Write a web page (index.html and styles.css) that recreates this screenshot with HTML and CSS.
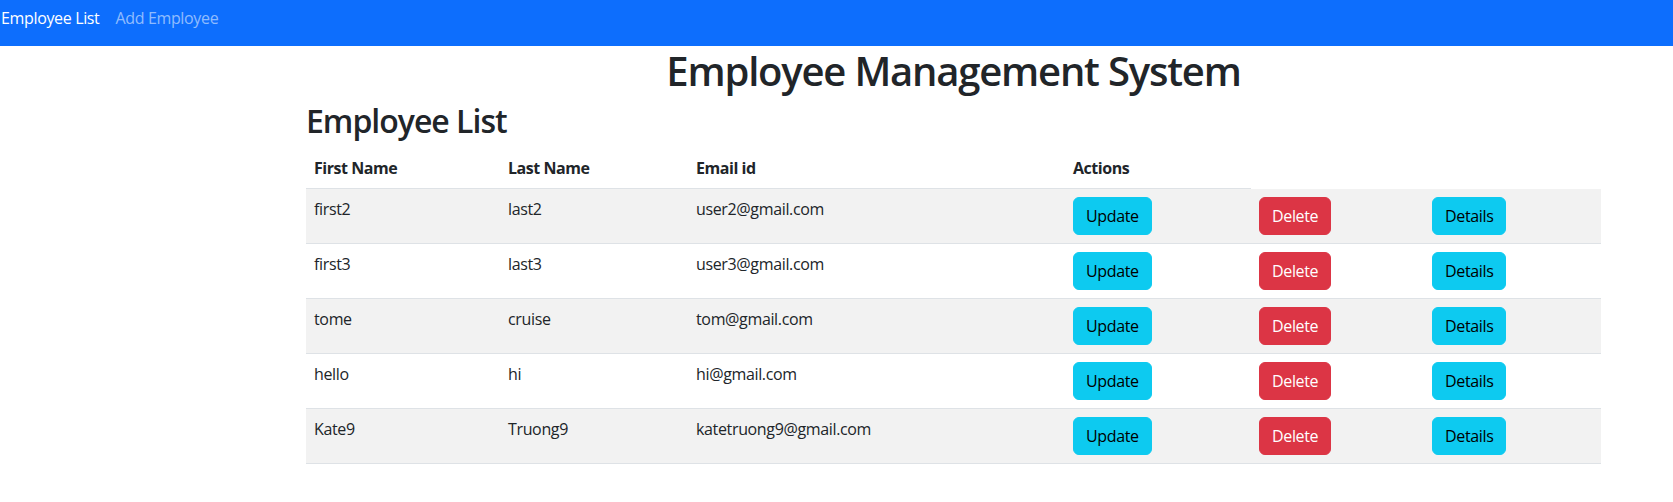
FILE: index.html
```html
<!DOCTYPE html>
<html lang="en">
<head>
<meta charset="utf-8">
<title>Employee Management System</title>
<link rel="stylesheet" href="styles.css">
</head>
<body>
<nav class="navbar">
  <a class="nav-link active" href="#">Employee List</a>
  <a class="nav-link" href="#">Add Employee</a>
</nav>
<main class="container">
  <h1 class="title">Employee Management System</h1>
  <h2 class="subtitle">Employee List</h2>
  <table class="table">
    <colgroup>
      <col class="c-first">
      <col class="c-last">
      <col class="c-email">
      <col class="c-act1">
      <col class="c-act2">
      <col class="c-act3">
    </colgroup>
    <thead>
      <tr>
        <th>First Name</th>
        <th>Last Name</th>
        <th>Email id</th>
        <th>Actions</th>
      </tr>
    </thead>
    <tbody>
      <tr>
        <td>first2</td><td>last2</td><td>user2@gmail.com</td>
        <td><button class="btn btn-info">Update</button></td>
        <td><button class="btn btn-danger">Delete</button></td>
        <td><button class="btn btn-info">Details</button></td>
      </tr>
      <tr>
        <td>first3</td><td>last3</td><td>user3@gmail.com</td>
        <td><button class="btn btn-info">Update</button></td>
        <td><button class="btn btn-danger">Delete</button></td>
        <td><button class="btn btn-info">Details</button></td>
      </tr>
      <tr>
        <td>tome</td><td>cruise</td><td>tom@gmail.com</td>
        <td><button class="btn btn-info">Update</button></td>
        <td><button class="btn btn-danger">Delete</button></td>
        <td><button class="btn btn-info">Details</button></td>
      </tr>
      <tr>
        <td>hello</td><td>hi</td><td>hi@gmail.com</td>
        <td><button class="btn btn-info">Update</button></td>
        <td><button class="btn btn-danger">Delete</button></td>
        <td><button class="btn btn-info">Details</button></td>
      </tr>
      <tr>
        <td>Kate9</td><td>Truong9</td><td>katetruong9@gmail.com</td>
        <td><button class="btn btn-info">Update</button></td>
        <td><button class="btn btn-danger">Delete</button></td>
        <td><button class="btn btn-info">Details</button></td>
      </tr>
    </tbody>
  </table>
</main>
</body>
</html>
```
FILE: styles.css
```css
* { box-sizing: border-box; }

html, body {
  margin: 0;
  padding: 0;
  background: #fff;
}

body {
  font-family: "Open Sans", "Noto Sans", sans-serif;
  font-size: 16px;
  line-height: 24px;
  letter-spacing: -0.35px;
  color: #212529;
}

.navbar {
  display: flex;
  gap: 16px;
  height: 46px;
  padding: 6px 0 0 1px;
  background: #0d6efd;
}

.nav-link {
  color: rgba(255, 255, 255, 0.55);
  text-decoration: none;
  font-size: 16px;
  line-height: 24px;
}

.nav-link.active {
  color: #fff;
}

.container {
  width: 1295px;
  margin-left: 306px;
}

.title {
  margin: 1px 0 7px;
  font-size: 40px;
  line-height: 48px;
  font-weight: 600;
  letter-spacing: -1.2px;
  text-align: center;
}

.subtitle {
  margin: 0 0 8px;
  font-size: 32px;
  line-height: 38.4px;
  font-weight: 600;
  letter-spacing: -1px;
}

.table {
  width: 1295px;
  table-layout: fixed;
  border-collapse: collapse;
  margin-bottom: 16px;
}

.c-first { width: 194px; }
.c-last { width: 188px; }
.c-email { width: 377px; }
.c-act1 { width: 186px; }
.c-act2 { width: 173px; }
.c-act3 { width: 177px; }

.table th,
.table td {
  padding: 8px;
  text-align: left;
  vertical-align: top;
  border-bottom: 1px solid #dee2e6;
}

.table th {
  font-weight: 700;
  letter-spacing: -0.45px;
}

.table tbody tr:nth-child(odd) td {
  background: #f2f2f2;
}

.btn {
  display: inline-block;
  padding: 6px 12px;
  border: 1px solid transparent;
  border-radius: 6px;
  font-family: inherit;
  font-size: 16px;
  line-height: 24px;
  letter-spacing: -0.35px;
  cursor: pointer;
}

.btn-info {
  background: #0dcaf0;
  border-color: #0dcaf0;
  color: #000;
}

.btn-danger {
  background: #dc3545;
  border-color: #dc3545;
  color: #fff;
}
```
